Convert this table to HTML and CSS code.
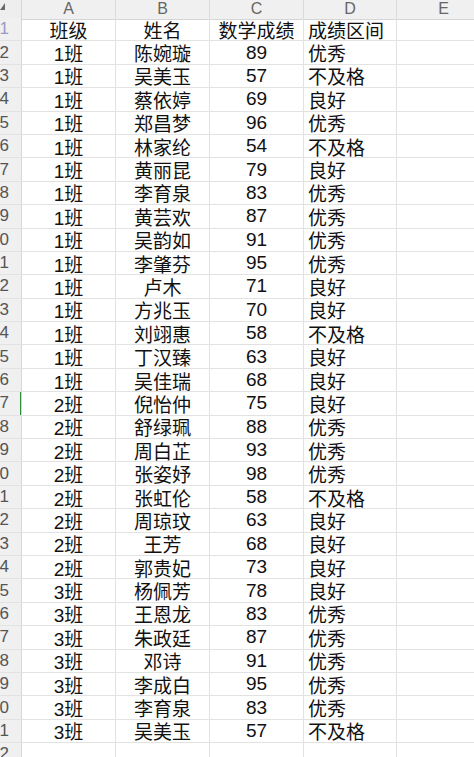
FILE: index.html
```html
<!DOCTYPE html>
<html lang="zh-CN">
<head>
<meta charset="utf-8">
<title>成绩表</title>
<link rel="stylesheet" href="styles.css">
</head>
<body>
<div class="sheet">
  <div class="row head">
    <div class="corner"><span class="tri"></span></div>
    <div class="col">A</div><div class="col">B</div><div class="col">C</div><div class="col">D</div><div class="col">E</div>
  </div>
  <div class="row"><div class="rh sel"><span>1</span></div><div class="c ctr">班级</div><div class="c ctr">姓名</div><div class="c ctr">数学成绩</div><div class="c lft">成绩区间</div><div class="c"></div></div>
  <div class="row"><div class="rh"><span>2</span></div><div class="c ctr">1班</div><div class="c ctr">陈婉璇</div><div class="c ctr">89</div><div class="c lft">优秀</div><div class="c"></div></div>
  <div class="row"><div class="rh"><span>3</span></div><div class="c ctr">1班</div><div class="c ctr">吴美玉</div><div class="c ctr">57</div><div class="c lft">不及格</div><div class="c"></div></div>
  <div class="row"><div class="rh"><span>4</span></div><div class="c ctr">1班</div><div class="c ctr">蔡依婷</div><div class="c ctr">69</div><div class="c lft">良好</div><div class="c"></div></div>
  <div class="row"><div class="rh"><span>5</span></div><div class="c ctr">1班</div><div class="c ctr">郑昌梦</div><div class="c ctr">96</div><div class="c lft">优秀</div><div class="c"></div></div>
  <div class="row"><div class="rh"><span>6</span></div><div class="c ctr">1班</div><div class="c ctr">林家纶</div><div class="c ctr">54</div><div class="c lft">不及格</div><div class="c"></div></div>
  <div class="row"><div class="rh"><span>7</span></div><div class="c ctr">1班</div><div class="c ctr">黄丽昆</div><div class="c ctr">79</div><div class="c lft">良好</div><div class="c"></div></div>
  <div class="row"><div class="rh"><span>8</span></div><div class="c ctr">1班</div><div class="c ctr">李育泉</div><div class="c ctr">83</div><div class="c lft">优秀</div><div class="c"></div></div>
  <div class="row"><div class="rh"><span>9</span></div><div class="c ctr">1班</div><div class="c ctr">黄芸欢</div><div class="c ctr">87</div><div class="c lft">优秀</div><div class="c"></div></div>
  <div class="row"><div class="rh"><span>10</span></div><div class="c ctr">1班</div><div class="c ctr">吴韵如</div><div class="c ctr">91</div><div class="c lft">优秀</div><div class="c"></div></div>
  <div class="row"><div class="rh"><span>11</span></div><div class="c ctr">1班</div><div class="c ctr">李肇芬</div><div class="c ctr">95</div><div class="c lft">优秀</div><div class="c"></div></div>
  <div class="row"><div class="rh"><span>12</span></div><div class="c ctr">1班</div><div class="c ctr">卢木</div><div class="c ctr">71</div><div class="c lft">良好</div><div class="c"></div></div>
  <div class="row"><div class="rh"><span>13</span></div><div class="c ctr">1班</div><div class="c ctr">方兆玉</div><div class="c ctr">70</div><div class="c lft">良好</div><div class="c"></div></div>
  <div class="row"><div class="rh"><span>14</span></div><div class="c ctr">1班</div><div class="c ctr">刘翊惠</div><div class="c ctr">58</div><div class="c lft">不及格</div><div class="c"></div></div>
  <div class="row"><div class="rh"><span>15</span></div><div class="c ctr">1班</div><div class="c ctr">丁汉臻</div><div class="c ctr">63</div><div class="c lft">良好</div><div class="c"></div></div>
  <div class="row"><div class="rh"><span>16</span></div><div class="c ctr">1班</div><div class="c ctr">吴佳瑞</div><div class="c ctr">68</div><div class="c lft">良好</div><div class="c"></div></div>
  <div class="row"><div class="rh active"><span>17</span></div><div class="c ctr">2班</div><div class="c ctr">倪怡仲</div><div class="c ctr">75</div><div class="c lft">良好</div><div class="c"></div></div>
  <div class="row"><div class="rh"><span>18</span></div><div class="c ctr">2班</div><div class="c ctr">舒绿珮</div><div class="c ctr">88</div><div class="c lft">优秀</div><div class="c"></div></div>
  <div class="row"><div class="rh"><span>19</span></div><div class="c ctr">2班</div><div class="c ctr">周白芷</div><div class="c ctr">93</div><div class="c lft">优秀</div><div class="c"></div></div>
  <div class="row"><div class="rh"><span>20</span></div><div class="c ctr">2班</div><div class="c ctr">张姿妤</div><div class="c ctr">98</div><div class="c lft">优秀</div><div class="c"></div></div>
  <div class="row"><div class="rh"><span>21</span></div><div class="c ctr">2班</div><div class="c ctr">张虹伦</div><div class="c ctr">58</div><div class="c lft">不及格</div><div class="c"></div></div>
  <div class="row"><div class="rh"><span>22</span></div><div class="c ctr">2班</div><div class="c ctr">周琼玟</div><div class="c ctr">63</div><div class="c lft">良好</div><div class="c"></div></div>
  <div class="row"><div class="rh"><span>23</span></div><div class="c ctr">2班</div><div class="c ctr">王芳</div><div class="c ctr">68</div><div class="c lft">良好</div><div class="c"></div></div>
  <div class="row"><div class="rh"><span>24</span></div><div class="c ctr">2班</div><div class="c ctr">郭贵妃</div><div class="c ctr">73</div><div class="c lft">良好</div><div class="c"></div></div>
  <div class="row"><div class="rh"><span>25</span></div><div class="c ctr">3班</div><div class="c ctr">杨佩芳</div><div class="c ctr">78</div><div class="c lft">良好</div><div class="c"></div></div>
  <div class="row"><div class="rh"><span>26</span></div><div class="c ctr">3班</div><div class="c ctr">王恩龙</div><div class="c ctr">83</div><div class="c lft">优秀</div><div class="c"></div></div>
  <div class="row"><div class="rh"><span>27</span></div><div class="c ctr">3班</div><div class="c ctr">朱政廷</div><div class="c ctr">87</div><div class="c lft">优秀</div><div class="c"></div></div>
  <div class="row"><div class="rh"><span>28</span></div><div class="c ctr">3班</div><div class="c ctr">邓诗</div><div class="c ctr">91</div><div class="c lft">优秀</div><div class="c"></div></div>
  <div class="row"><div class="rh"><span>29</span></div><div class="c ctr">3班</div><div class="c ctr">李成白</div><div class="c ctr">95</div><div class="c lft">优秀</div><div class="c"></div></div>
  <div class="row"><div class="rh"><span>30</span></div><div class="c ctr">3班</div><div class="c ctr">李育泉</div><div class="c ctr">83</div><div class="c lft">优秀</div><div class="c"></div></div>
  <div class="row"><div class="rh"><span>31</span></div><div class="c ctr">3班</div><div class="c ctr">吴美玉</div><div class="c ctr">57</div><div class="c lft">不及格</div><div class="c"></div></div>
  <div class="row"><div class="rh"><span>32</span></div><div class="c"></div><div class="c"></div><div class="c"></div><div class="c"></div><div class="c"></div></div>
</div>
</body>
</html>
```

FILE: styles.css
```css
html, body {
  margin: 0;
  padding: 0;
  background: #ffffff;
  overflow: hidden;
}
body {
  width: 474px;
  height: 757px;
  font-family: "Liberation Sans", "Noto Sans CJK SC", sans-serif;
  color: #111111;
}
.sheet {
  display: flex;
  flex-direction: column;
  width: 491px;
}
.row {
  display: grid;
  grid-template-columns: 22px 94px 94px 94px 93px 94px;
  height: 23.4px;
  flex: none;
}
.row.head {
  height: 18px;
}
.corner {
  position: relative;
  background: #eeeeee;
  border-right: 1px solid #d6d6d6;
  border-bottom: 1px solid #d6d6d6;
  box-sizing: border-box;
}
.tri {
  position: absolute;
  left: 0;
  top: 3px;
  width: 0;
  height: 0;
  border-left: 5px solid transparent;
  border-bottom: 7px solid #6a6a6a;
}
.col {
  background: #f0f0f0;
  border-right: 1px solid #dadada;
  border-bottom: 1px solid #d6d6d6;
  box-sizing: border-box;
  display: flex;
  justify-content: center;
  align-items: center;
  font-size: 16px;
  line-height: 18px;
  color: #666666;
  padding-bottom: 1px;
}
.rh {
  position: relative;
  background: #f0f0f0;
  border-right: 1px solid #d6d6d6;
  border-bottom: 1px solid #e2e2e2;
  box-sizing: border-box;
  display: flex;
  justify-content: flex-end;
  align-items: center;
  padding-right: 12px;
  overflow: hidden;
  font-size: 17px;
  color: #555555;
  white-space: nowrap;
}
.rh.sel span {
  color: #9a9ac4;
}
.rh.active::after {
  content: "";
  position: absolute;
  right: -1px;
  top: 0;
  bottom: 0;
  width: 2px;
  background: #2e8b3e;
}
.c {
  border-right: 1px solid #e2e2e2;
  border-bottom: 1px solid #e2e2e2;
  box-sizing: border-box;
  display: flex;
  align-items: center;
  font-size: 19px;
  white-space: nowrap;
  overflow: hidden;
}
.ctr {
  justify-content: center;
}
.lft {
  justify-content: flex-start;
  padding-left: 4px;
}
```
